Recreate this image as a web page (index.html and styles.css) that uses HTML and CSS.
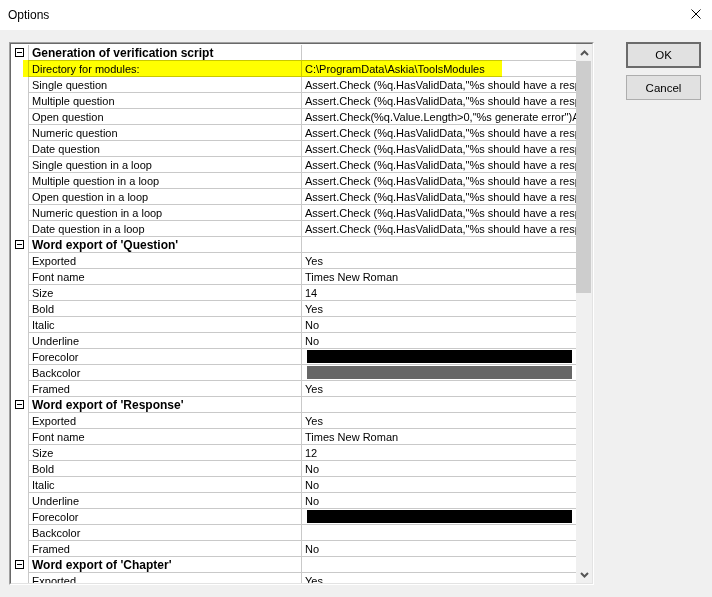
FILE: index.html
```html
<!DOCTYPE html>
<html>
<head>
<meta charset="utf-8">
<title>Options</title>
<link rel="stylesheet" href="styles.css">
</head>
<body>
<div class="window">
  <div class="titlebar">
    <span class="title">Options</span>
    <svg class="close" width="10" height="10" viewBox="0 0 10 10"><path d="M0.5 0.5 L9.5 9.5 M9.5 0.5 L0.5 9.5" stroke="#000" stroke-width="1" fill="none"/></svg>
  </div>
  <div class="body">
    <div class="grid-outer">
      <div class="grid-inner">
        <div class="rows">
          <div class="row cat"><div class="m"><span class="exp"></span></div><div class="n">Generation of verification script</div><div class="v"></div></div>
          <div class="row"><div class="m"></div><div class="n">Directory for modules:</div><div class="v">C:\ProgramData\Askia\ToolsModules</div><span class="hl"></span></div>
          <div class="row"><div class="m"></div><div class="n">Single question</div><div class="v">Assert.Check (%q.HasValidData,"%s should have a response")</div></div>
          <div class="row"><div class="m"></div><div class="n">Multiple question</div><div class="v">Assert.Check (%q.HasValidData,"%s should have a response")</div></div>
          <div class="row"><div class="m"></div><div class="n">Open question</div><div class="v">Assert.Check(%q.Value.Length&gt;0,"%s generate error")And</div></div>
          <div class="row"><div class="m"></div><div class="n">Numeric question</div><div class="v">Assert.Check (%q.HasValidData,"%s should have a response")</div></div>
          <div class="row"><div class="m"></div><div class="n">Date question</div><div class="v">Assert.Check (%q.HasValidData,"%s should have a response")</div></div>
          <div class="row"><div class="m"></div><div class="n">Single question in a loop</div><div class="v">Assert.Check (%q.HasValidData,"%s should have a response")</div></div>
          <div class="row"><div class="m"></div><div class="n">Multiple question in a loop</div><div class="v">Assert.Check (%q.HasValidData,"%s should have a response")</div></div>
          <div class="row"><div class="m"></div><div class="n">Open question in a loop</div><div class="v">Assert.Check (%q.HasValidData,"%s should have a response")</div></div>
          <div class="row"><div class="m"></div><div class="n">Numeric question in a loop</div><div class="v">Assert.Check (%q.HasValidData,"%s should have a response")</div></div>
          <div class="row"><div class="m"></div><div class="n">Date question in a loop</div><div class="v">Assert.Check (%q.HasValidData,"%s should have a response")</div></div>
          <div class="row cat"><div class="m"><span class="exp"></span></div><div class="n">Word export of 'Question'</div><div class="v"></div></div>
          <div class="row"><div class="m"></div><div class="n">Exported</div><div class="v">Yes</div></div>
          <div class="row"><div class="m"></div><div class="n">Font name</div><div class="v">Times New Roman</div></div>
          <div class="row"><div class="m"></div><div class="n">Size</div><div class="v">14</div></div>
          <div class="row"><div class="m"></div><div class="n">Bold</div><div class="v">Yes</div></div>
          <div class="row"><div class="m"></div><div class="n">Italic</div><div class="v">No</div></div>
          <div class="row"><div class="m"></div><div class="n">Underline</div><div class="v">No</div></div>
          <div class="row"><div class="m"></div><div class="n">Forecolor</div><div class="v"><span class="swatch black"></span></div></div>
          <div class="row"><div class="m"></div><div class="n">Backcolor</div><div class="v"><span class="swatch gray"></span></div></div>
          <div class="row"><div class="m"></div><div class="n">Framed</div><div class="v">Yes</div></div>
          <div class="row cat"><div class="m"><span class="exp"></span></div><div class="n">Word export of 'Response'</div><div class="v"></div></div>
          <div class="row"><div class="m"></div><div class="n">Exported</div><div class="v">Yes</div></div>
          <div class="row"><div class="m"></div><div class="n">Font name</div><div class="v">Times New Roman</div></div>
          <div class="row"><div class="m"></div><div class="n">Size</div><div class="v">12</div></div>
          <div class="row"><div class="m"></div><div class="n">Bold</div><div class="v">No</div></div>
          <div class="row"><div class="m"></div><div class="n">Italic</div><div class="v">No</div></div>
          <div class="row"><div class="m"></div><div class="n">Underline</div><div class="v">No</div></div>
          <div class="row"><div class="m"></div><div class="n">Forecolor</div><div class="v"><span class="swatch black"></span></div></div>
          <div class="row"><div class="m"></div><div class="n">Backcolor</div><div class="v"></div></div>
          <div class="row"><div class="m"></div><div class="n">Framed</div><div class="v">No</div></div>
          <div class="row cat"><div class="m"><span class="exp"></span></div><div class="n">Word export of 'Chapter'</div><div class="v"></div></div>
          <div class="row"><div class="m"></div><div class="n">Exported</div><div class="v">Yes</div></div>
          <div class="row"><div class="m"></div><div class="n">Font name</div><div class="v">Times New Roman</div></div>
        </div>
        <div class="vscroll">
          <div class="sb-btn"><svg width="9" height="6" viewBox="0 0 9 6"><path d="M1 5 L4.5 1.5 L8 5" stroke="#555" stroke-width="2" fill="none"/></svg></div>
          <div class="thumb"></div>
          <div class="track"></div>
          <div class="sb-btn"><svg width="9" height="6" viewBox="0 0 9 6"><path d="M1 1 L4.5 4.5 L8 1" stroke="#555" stroke-width="2" fill="none"/></svg></div>
        </div>
      </div>
    </div>
    <div class="buttons">
      <button class="btn default">OK</button>
      <button class="btn">Cancel</button>
    </div>
  </div>
</div>
</body>
</html>
```
FILE: styles.css
```css
* { box-sizing: border-box; }
html, body { margin: 0; padding: 0; }
body {
  width: 712px;
  height: 597px;
  background: #f0f0f0;
  font-family: "Liberation Sans", Arial, sans-serif;
  color: #000;
  overflow: hidden;
}
.window { display: flex; flex-direction: column; height: 597px; }
.titlebar {
  height: 30px;
  background: #fff;
  display: flex;
  align-items: center;
  justify-content: space-between;
  padding: 0 11px 0 8px;
}
.title { font-size: 12px; line-height: 30px; }
.close { display: block; margin-top: -2px; }
.body {
  display: flex;
  align-items: flex-start;
  padding: 12px 0 0 9px;
}
.grid-outer {
  width: 585px;
  height: 543px;
  border: 1px solid;
  border-color: #a0a0a0 #ffffff #ffffff #a0a0a0;
}
.grid-inner {
  height: 100%;
  border: 1px solid;
  border-color: #696969 #e3e3e3 #e3e3e3 #696969;
  display: flex;
}
.rows {
  width: 565px;
  height: 539px;
  padding-top: 1px;
  background: #fff;
  overflow: hidden;
}
.row { display: flex; height: 16px; position: relative; font-size: 11px; }
.m { width: 17px; flex: none; position: relative; }
.n, .v {
  height: 16px;
  width: 274px;
  flex: none;
  border-bottom: 1px solid #c9c9c9;
  padding: 2px 0 0 3px;
  line-height: 13px;
  white-space: nowrap;
  overflow: hidden;
}
.n { border-left: 1px solid #c9c9c9; border-right: 1px solid #c9c9c9; }
.cat .n { font-weight: bold; font-size: 12px; }
.exp {
  position: absolute;
  left: 4px;
  top: 3px;
  width: 9px;
  height: 9px;
  border: 1px solid #000;
}
.exp::after {
  content: "";
  position: absolute;
  left: 1px;
  top: 3px;
  width: 5px;
  height: 1px;
  background: #000;
}
.v { position: relative; }
.swatch {
  position: absolute;
  left: 5px;
  top: 1px;
  width: 265px;
  height: 13px;
}
.swatch.black { background: #000; }
.swatch.gray { background: #666666; }
.hl {
  position: absolute;
  left: 12px;
  top: -1px;
  width: 479px;
  height: 17px;
  background: #ffff00;
  mix-blend-mode: multiply;
}
.vscroll {
  width: 16px;
  height: 539px;
  background: #f0f0f0;
  display: flex;
  flex-direction: column;
}
.sb-btn {
  height: 17px;
  display: flex;
  align-items: center;
  justify-content: center;
}
.sb-btn svg { display: block; }
.thumb { height: 232px; width: 15px; background: #cdcdcd; }
.track { flex: 1; }
.buttons {
  margin-left: 32px;
  display: flex;
  flex-direction: column;
  gap: 7px;
}
.btn {
  width: 75px;
  height: 25px;
  background: #e1e1e1;
  border: 1px solid #adadad;
  font-family: "Liberation Sans", Arial, sans-serif;
  font-size: 11.5px;
  color: #000;
  padding: 0;
  margin: 0;
}
.btn.default {
  height: 26px;
  border: 2px solid #6b6b6b;
}
```
